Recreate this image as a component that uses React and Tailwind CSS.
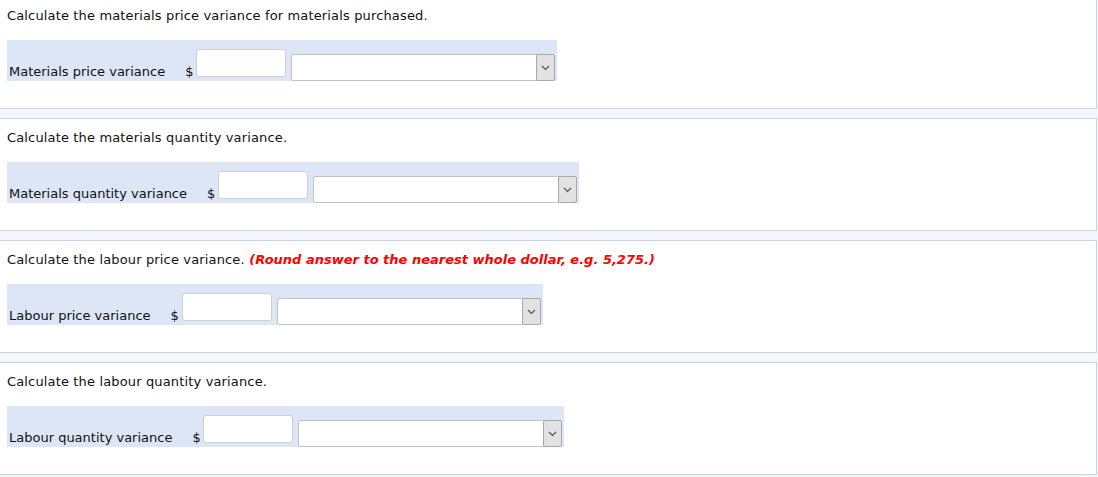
import React from "react";

const questions = [
  {
    prompt: "Calculate the materials price variance for materials purchased.",
    label: "Materials price variance",
  },
  {
    prompt: "Calculate the materials quantity variance.",
    label: "Materials quantity variance",
  },
  {
    prompt: "Calculate the labour price variance.",
    note: "(Round answer to the nearest whole dollar, e.g. 5,275.)",
    label: "Labour price variance",
  },
  {
    prompt: "Calculate the labour quantity variance.",
    label: "Labour quantity variance",
  },
];

const Chevron = () => (
  <svg width="9" height="6" viewBox="0 0 9 6" fill="none">
    <polyline points="1,1 4.5,4.5 8,1" stroke="#555" strokeWidth="1.2" />
  </svg>
);

const Question = ({ q, first }) => {
  return (
    <div
      className={`bg-white border-[#c9d2de] border-b border-r px-[7px] ${
        first ? "h-[109px] pt-[8px]" : "h-[113px] border-t pt-[11px]"
      }`}
    >
      {/* Question text */}
      <p className="text-[13px] leading-[16px] tracking-[0.15px] text-[#111]">
        {q.prompt}
        {q.note && (
          <span className="font-bold italic tracking-normal text-[#ff0000]"> {q.note}</span>
        )}
      </p>

      {/* Answer row */}
      <div className="mt-[16px] h-[41px] w-fit flex items-end bg-[#dce6f6] pl-[2px] pr-[2px]">
        <span className="text-[13px] leading-[16px] text-[#111] mb-[1px] mr-[20px]">
          {q.label}
        </span>
        <span className="text-[13px] leading-[16px] text-[#111] mb-[1px] w-[11px]">
          $
        </span>
        <div className="w-[90px] h-[28px] mb-[4px] bg-white border border-[#cfcfcf] rounded-[3px]"></div>
        <div className="ml-[5px] w-[264px] h-[27px] bg-white border border-[#c3c3c3] rounded-[2px] flex justify-end">
          <div className="w-[17px] h-full bg-[#e2e2e2] border border-[#a9a9a9] rounded-[2px] -mr-px -my-px box-content flex items-center justify-center">
            <Chevron />
          </div>
        </div>
      </div>
    </div>
  );
};

const App = () => {
  return (
    <div className="min-h-screen bg-[#f4f7fb] font-['DejaVu_Sans',sans-serif] pr-px">
      <div className="flex flex-col gap-[9px]">
        {questions.map((q, i) => (
          <Question key={i} q={q} first={i === 0} />
        ))}
      </div>
    </div>
  );
};

export default App;
